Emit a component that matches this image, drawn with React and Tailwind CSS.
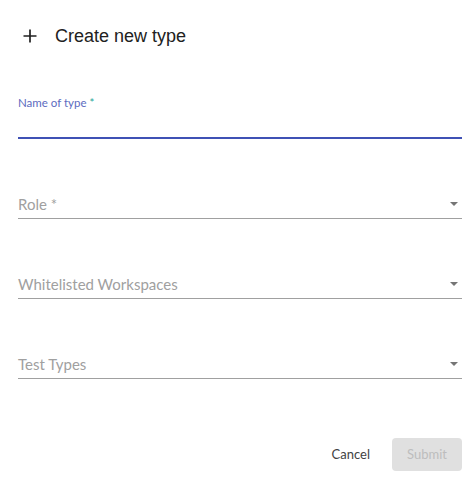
import React from 'react'

// Dialogo "Create new type": titulo, campo de texto y tres selects.

function Flecha() {
  return (
    <svg width="8" height="4" viewBox="0 0 8 4" className="mr-[4px]">
      <path d="M0 0 L8 0 L4 4 Z" fill="#757575" />
    </svg>
  )
}

function CampoSelect({ etiqueta }) {
  return (
    <div className="mt-[55px] flex h-[25px] items-center justify-between border-b border-[#a0a0a0] pb-[5px]">
      <span className="text-[15px] leading-[18px] text-[#a0a0a0] font-['Lato',sans-serif]">{etiqueta}</span>
      <Flecha />
    </div>
  )
}

export default function App() {
  return (
    <div className="w-[474px] h-[480px] bg-white pl-[18px] pr-[12px] pt-[24px]">
      {/* Titulo */}
      <div className="flex h-[24px] items-center">
        <svg width="16" height="16" viewBox="0 0 16 16" className="ml-[4px]">
          <path d="M8 1.5 V14.5 M1.5 8 H14.5" stroke="#212121" strokeWidth="1.7" />
        </svg>
        <span className="ml-[17px] text-[18px] text-[#212121] font-['Liberation_Sans',Arial,sans-serif]">
          Create new type
        </span>
      </div>

      {/* Nombre */}
      <div className="mt-[48px]">
        <div className="h-[14px] text-[11.5px] leading-[14px] text-[#5c6bc0] font-['Lato',sans-serif]">
          Name of type <span className="text-[#26a69a]">*</span>
        </div>
        <div className="h-[29px] border-b-2 border-[#3f51b5]" />
      </div>

      <CampoSelect etiqueta="Role *" />
      <CampoSelect etiqueta="Whitelisted Workspaces" />
      <CampoSelect etiqueta="Test Types" />

      {/* Acciones */}
      <div className="mt-[59px] flex items-center justify-end gap-[14px] font-['Lato',sans-serif]">
        <button className="px-[8px] text-[13px] text-[#424242]">Cancel</button>
        <button className="h-[33px] w-[70px] rounded-[4px] bg-[#e0e0e0] text-[13px] text-[#bdbdbd]">
          Submit
        </button>
      </div>
    </div>
  )
}
